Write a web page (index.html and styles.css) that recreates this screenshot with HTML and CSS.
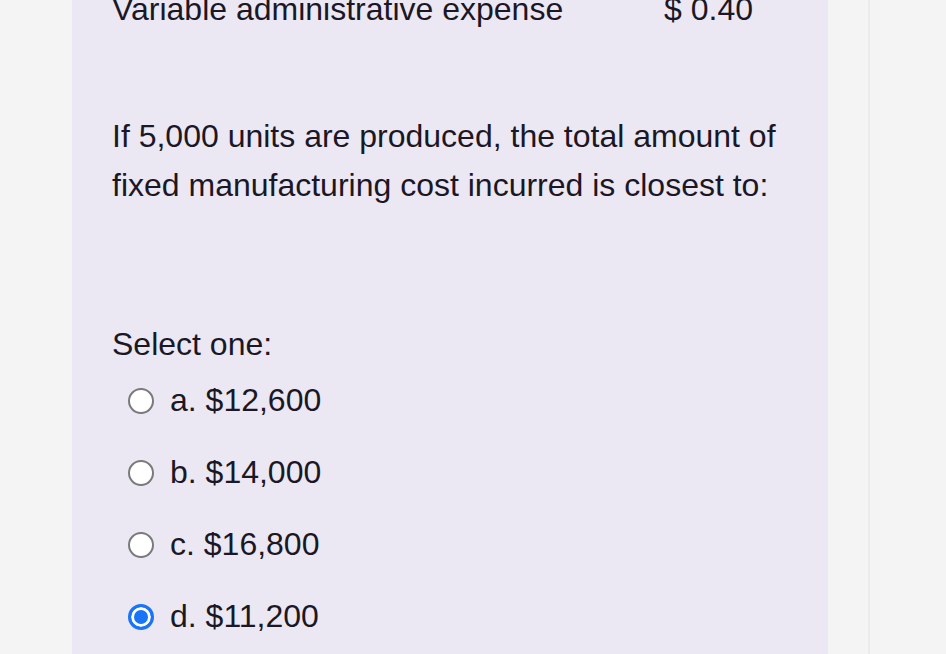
FILE: index.html
```html
<!DOCTYPE html>
<html>
<head>
<meta charset="utf-8">
<link rel="stylesheet" href="styles.css">
</head>
<body>
<div class="page">
  <div class="card">
    <div class="cost-row">
      <span class="cost-label">Variable administrative expense</span>
      <span class="cost-value">$ 0.40</span>
    </div>
    <p class="question">If 5,000 units are produced, the total amount of fixed manufacturing cost incurred is closest to:</p>
    <div class="prompt">Select one:</div>
    <div class="answers">
      <label class="answer"><span class="radio"></span><span class="answer-text">a. $12,600</span></label>
      <label class="answer"><span class="radio"></span><span class="answer-text">b. $14,000</span></label>
      <label class="answer"><span class="radio"></span><span class="answer-text">c. $16,800</span></label>
      <label class="answer"><span class="radio checked"></span><span class="answer-text">d. $11,200</span></label>
    </div>
  </div>
  <div class="gutter"></div>
  <div class="sidebar"></div>
</div>
</body>
</html>
```

FILE: styles.css
```css
html, body {
  margin: 0;
  padding: 0;
  height: 100%;
  overflow: hidden;
  background: #f4f4f4;
}
body {
  font-family: "Liberation Sans", Arial, sans-serif;
  font-size: 32px;
  color: #1b1725;
}
.page {
  display: flex;
  height: 100%;
  padding-left: 72px;
}
.card {
  width: 756px;
  box-sizing: border-box;
  background: #ebe8f3;
  padding: 0 38px 0 40px;
  margin-top: -11px;
}
.cost-row {
  display: flex;
  line-height: 40px;
}
.cost-label {
  width: 552px;
}
.question {
  margin: 83px 0 0;
  line-height: 49px;
}
.prompt {
  margin-top: 110px;
  line-height: 49px;
}
.answers {
  display: flex;
  flex-direction: column;
  gap: 23px;
  margin-top: 7px;
}
.answer {
  display: flex;
  align-items: center;
  height: 49px;
  padding-left: 16px;
}
.radio {
  width: 26px;
  height: 26px;
  box-sizing: border-box;
  border: 2px solid #7a7a7a;
  border-radius: 50%;
  background: #fff;
  margin-right: 16px;
  flex-shrink: 0;
}
.radio.checked {
  border: 3px solid #1a74f6;
  background: #1a74f6;
  box-shadow: inset 0 0 0 3px #fff;
}
.gutter {
  width: 40px;
}
.sidebar {
  flex: 1;
  border-left: 2px solid #ebebeb;
}
```
